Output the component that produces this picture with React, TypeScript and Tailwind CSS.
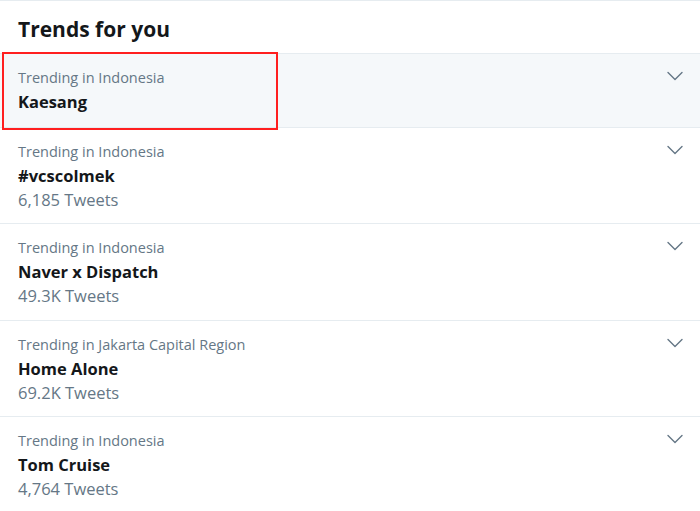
import { ChevronDown } from 'lucide-react'

interface Trend {
  place: string
  name: string
  tweets?: string
  pb: string
}

const trends: Trend[] = [
  { place: 'Trending in Indonesia', name: 'Kaesang', pb: 'pb-[13px]' },
  { place: 'Trending in Indonesia', name: '#vcscolmek', tweets: '6,185 Tweets', pb: 'pb-[11px]' },
  { place: 'Trending in Indonesia', name: 'Naver x Dispatch', tweets: '49.3K Tweets', pb: 'pb-3' },
  { place: 'Trending in Jakarta Capital Region', name: 'Home Alone', tweets: '69.2K Tweets', pb: 'pb-[11px]' },
  { place: 'Trending in Indonesia', name: 'Tom Cruise', tweets: '4,764 Tweets', pb: 'pb-[11px]' },
]

export default function App() {
  return (
    <div
      className="w-[700px] h-[511px] overflow-hidden bg-white border-t border-[#e6ecf0]"
      style={{ fontFamily: '"Open Sans", "Noto Sans", sans-serif' }}
    >
      <div className="h-[52px] flex items-center px-[18px] pt-1">
        <h2 className="text-[21px] font-bold text-[#14171a] leading-none">Trends for you</h2>
      </div>

      {trends.map((t, i) => (
        <div
          key={i}
          className={`relative border-t border-[#e6ecf0] px-[18px] pt-3 ${t.pb} ${i === 0 ? 'bg-[#f5f8fa]' : 'bg-white'}`}
        >
          <div className="text-[14.5px] leading-6 text-[#657786]">{t.place}</div>
          <div className="text-[16.5px] leading-6 font-bold text-[#14171a]">{t.name}</div>
          {t.tweets && <div className="text-[16.5px] leading-6 text-[#657786]">{t.tweets}</div>}
          <ChevronDown className="absolute right-[11px] top-[8px] w-7 h-7 text-[#657786]" strokeWidth={1.2} />
          {i === 0 && (
            <div className="absolute z-10 left-[2px] top-[-2px] w-[276px] h-[78px] border-2 border-[#ff1f1f] pointer-events-none" />
          )}
        </div>
      ))}
    </div>
  )
}
